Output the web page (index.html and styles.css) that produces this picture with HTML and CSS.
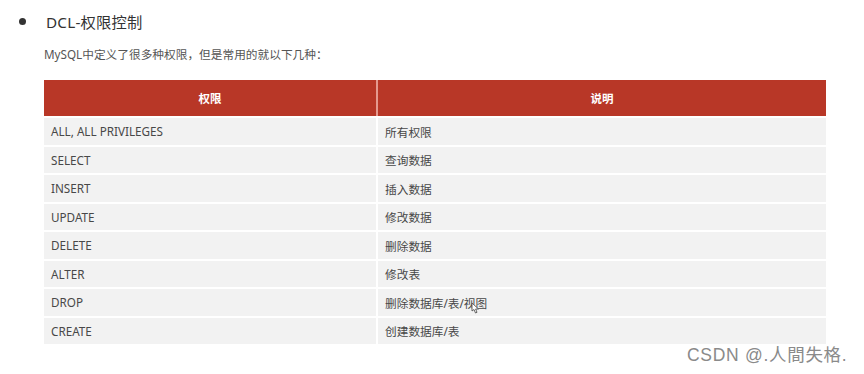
FILE: index.html
```html
<!DOCTYPE html>
<html lang="zh">
<head>
<meta charset="utf-8">
<link rel="stylesheet" href="styles.css">
</head>
<body>
<div class="page">
  <div class="title"><span class="dot"></span><span>DCL-权限控制</span></div>
  <p class="desc">MySQL中定义了很多种权限，但是常用的就以下几种：</p>
  <div class="table">
    <div class="th">权限</div><div class="th">说明</div>
    <div class="td">ALL, ALL PRIVILEGES</div><div class="td">所有权限</div>
    <div class="td">SELECT</div><div class="td">查询数据</div>
    <div class="td">INSERT</div><div class="td">插入数据</div>
    <div class="td">UPDATE</div><div class="td">修改数据</div>
    <div class="td">DELETE</div><div class="td">删除数据</div>
    <div class="td">ALTER</div><div class="td">修改表</div>
    <div class="td">DROP</div><div class="td cursor-cell">删除数据库/表/视图<svg class="cursor" width="9" height="12" viewBox="0 0 9 12"><path d="M1 1 L1 9 L3 7.5 L4.5 11 L6 10.3 L4.6 7 L7.5 7 Z" fill="#fff" stroke="#555" stroke-width="0.9"/></svg></div>
    <div class="td">CREATE</div><div class="td">创建数据库/表</div>
  </div>
  <div class="watermark">CSDN @.人間失格.</div>
</div>
</body>
</html>
```
FILE: styles.css
```css
html, body {
  margin: 0;
  padding: 0;
  background: #fff;
}
.page {
  position: relative;
  width: 864px;
  height: 374px;
  font-family: "Noto Sans", "Noto Sans CJK SC", sans-serif;
  color: #444;
}
.title {
  display: flex;
  align-items: center;
  padding: 10px 0 0 19px;
  height: 22px;
  font-size: 15.3px;
  color: #333;
  letter-spacing: 0.2px;
}
.dot {
  width: 7px;
  height: 7px;
  border-radius: 50%;
  background: #333;
  margin-right: 20px;
}
.desc {
  margin: 14px 0 0 44px;
  font-size: 11.7px;
  line-height: 16px;
  color: #555;
}
.table {
  display: grid;
  grid-template-columns: 332px 448px;
  column-gap: 2px;
  row-gap: 2px;
  margin: 18px 0 0 44px;
  width: 782px;
}
.th {
  background: #b83727;
  color: #fff;
  font-weight: bold;
  font-size: 11.5px;
  height: 36px;
  display: flex;
  align-items: center;
  justify-content: center;
}
.table .th:first-child {
  box-shadow: 2px 0 0 #e59a8f;
}
.td {
  background: #f2f2f2;
  height: 26.5px;
  display: flex;
  align-items: center;
  padding-left: 7px;
  font-size: 11.7px;
  color: #484848;
}
.cursor-cell {
  position: relative;
}
.cursor {
  position: absolute;
  left: 93px;
  top: 13px;
}
.watermark {
  position: absolute;
  left: 687px;
  top: 341px;
  font-family: "Liberation Sans", Arial, "Noto Sans CJK TC", sans-serif;
  font-size: 17.5px;
  letter-spacing: 0.7px;
  color: #8a8a8a;
}
```
